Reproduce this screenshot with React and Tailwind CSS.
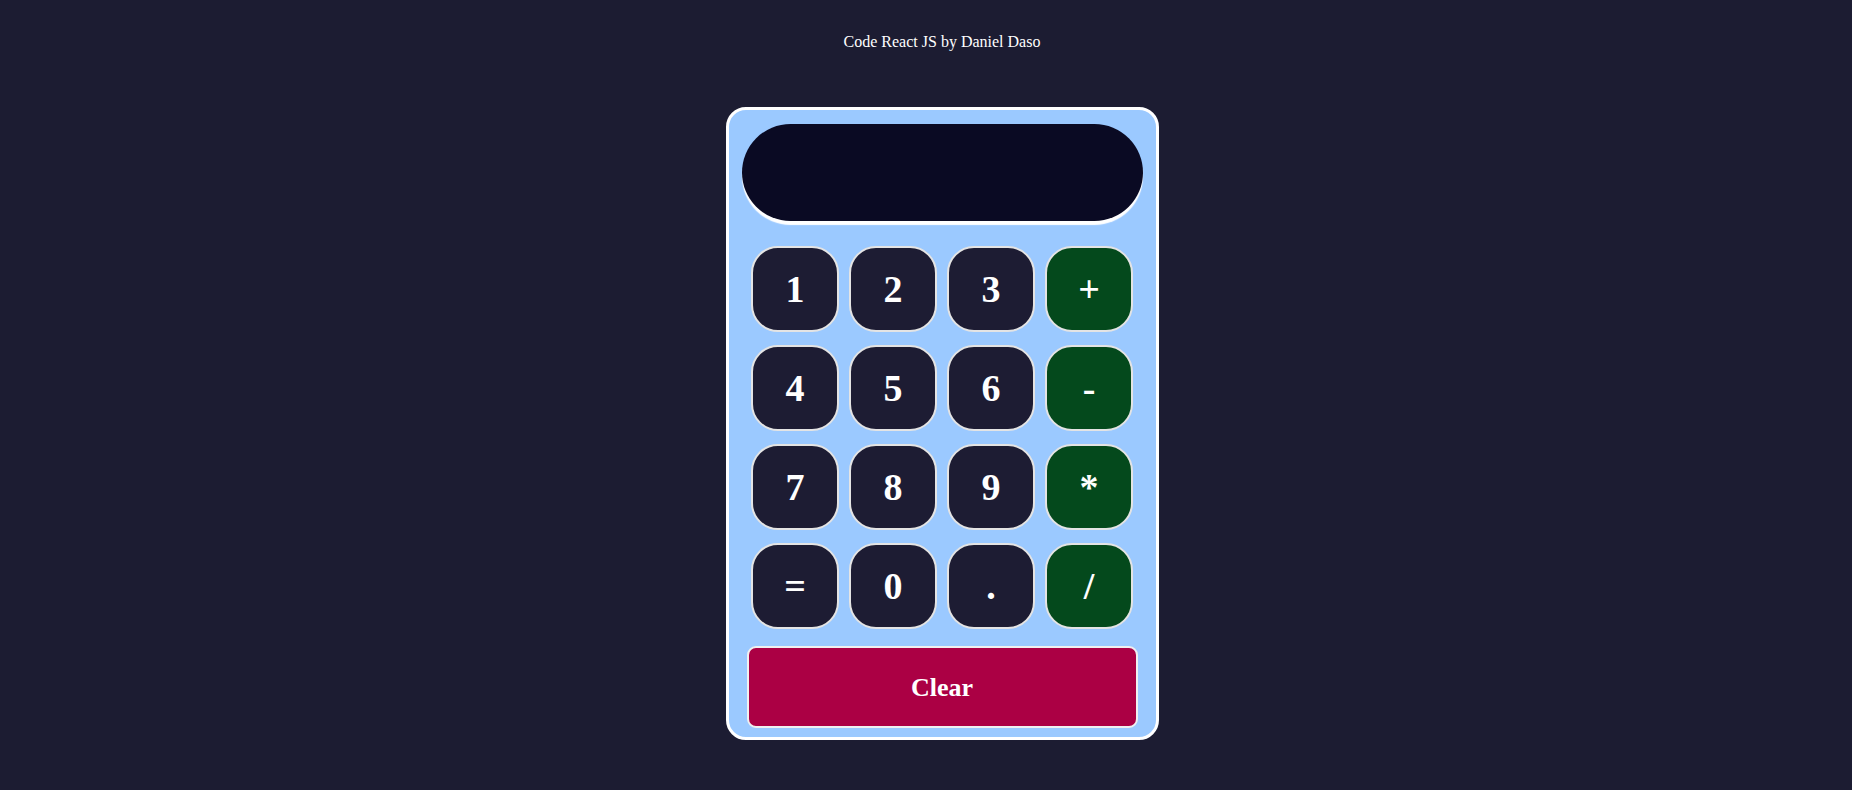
import React, { useState } from 'react';

const keys = [
  { label: '1' }, { label: '2' }, { label: '3' }, { label: '+', op: true },
  { label: '4' }, { label: '5' }, { label: '6' }, { label: '-', op: true },
  { label: '7' }, { label: '8' }, { label: '9' }, { label: '*', op: true },
  { label: '=' }, { label: '0' }, { label: '.' }, { label: '/', op: true },
];

const App = () => {
  const [value, setValue] = useState('');

  const press = (k) => {
    if (k === '=') {
      try {
        // eslint-disable-next-line no-new-func
        setValue(String(Function(`return (${value})`)()));
      } catch {
        setValue('Error');
      }
      return;
    }
    setValue((v) => v + k);
  };

  return (
    <div
      className="min-h-screen bg-[#1c1c32] text-white flex flex-col items-center pl-8 pt-[33px]"
      style={{ fontFamily: '"Liberation Serif", "Times New Roman", serif' }}
    >
      <p className="text-[16px] leading-[18px]">Code React JS by Daniel Daso</p>

      {/* Calculator */}
      <div className="mt-[56px] w-[433px] bg-[#9bc9ff] border-[3px] border-white rounded-[20px] px-[13px] pt-[14px] pb-[9px]">
        <div className="h-[97px] w-full rounded-full bg-[#0a0a23] shadow-[0_4px_1px_#ffffff] flex items-center justify-end px-10 text-[36px] font-bold overflow-hidden">
          {value}
        </div>

        <div className="mt-[25px] mx-auto w-[382px] grid grid-cols-[repeat(4,88px)] auto-rows-[86px] gap-x-[10px] gap-y-[13px]">
          {keys.map((k) => (
            <button
              key={k.label}
              onClick={() => press(k.label)}
              className={`rounded-[27px] border-2 border-[#e4e4e4] text-[38px] font-bold leading-none flex items-center justify-center ${
                k.op ? 'bg-[#04491c]' : 'bg-[#1d1c33]'
              }`}
            >
              {k.label}
            </button>
          ))}
        </div>

        <button
          onClick={() => setValue('')}
          className="mt-[17px] mx-auto block w-[391px] h-[82px] rounded-[9px] border-2 border-[#f0f0f0] bg-[#ab0044] text-[26px] font-bold"
        >
          Clear
        </button>
      </div>
    </div>
  );
};

export default App;
